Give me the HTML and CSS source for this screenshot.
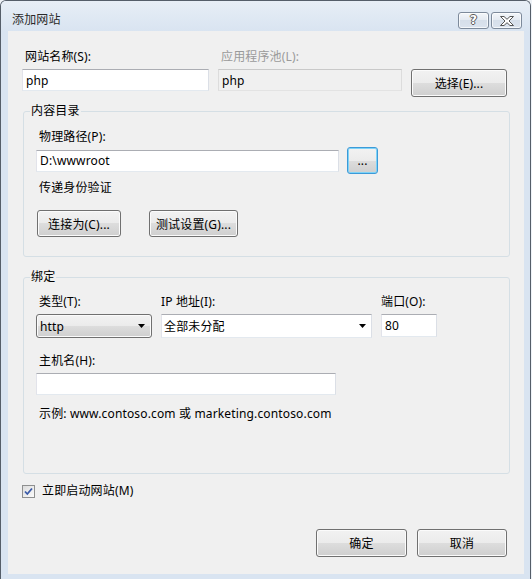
FILE: index.html
```html
<!DOCTYPE html>
<html lang="zh-CN">
<head>
  <meta charset="UTF-8">
  <title>添加网站</title>
  <link rel="stylesheet" href="styles.css">
</head>
<body>

<div class="window">
  <div class="titlebar">
    <span class="title">添加网站</span>
    <div class="caption-buttons">
      <span class="cap-btn help">?</span>
      <span class="cap-btn close">
        <svg width="14" height="10" viewBox="0 0 14 10">
          <polygon points="0.5,0.5 4,0.5 7,3.3 10,0.5 13.5,0.5 9,5 13.5,9.5 10,9.5 7,6.7 4,9.5 0.5,9.5 5,5" fill="#fff" stroke="#555" stroke-width="1" stroke-linejoin="round"/>
        </svg>
      </span>
    </div>
  </div>

  <div class="client">
    <!-- 网站名称 / 应用程序池 -->
    <div class="site-grid">
      <div class="lbl">网站名称(S):</div>
      <div class="lbl disabled">应用程序池(L):</div>
      <div></div>
      <input class="textbox site-name" type="text" value="php">
      <input class="textbox readonly pool" type="text" value="php" readonly>
      <button class="btn select-btn">选择(E)...</button>
    </div>

    <fieldset class="group group-content">
      <legend>内容目录</legend>
      <div class="lbl first">物理路径(P):</div>
      <div class="path-row">
        <input class="textbox path" type="text" value="D:\wwwroot">
        <button class="btn browse focused">...</button>
      </div>
      <div class="lbl note">传递身份验证</div>
      <div class="btn-row">
        <button class="btn connect-btn">连接为(C)...</button>
        <button class="btn test-btn">测试设置(G)...</button>
      </div>
    </fieldset>

    <fieldset class="group group-binding">
      <legend>绑定</legend>
      <div class="bind-grid">
        <div class="lbl">类型(T):</div>
        <div class="lbl flush">IP 地址(I):</div>
        <div class="lbl flush">端口(O):</div>
        <div class="combo dropdown">
          <span>http</span>
          <svg class="arrow" width="7" height="4" viewBox="0 0 7 4"><polygon points="0,0 7,0 3.5,4" fill="#000"/></svg>
        </div>
        <div class="combo editable">
          <span>全部未分配</span>
          <svg class="arrow" width="7" height="4" viewBox="0 0 7 4"><polygon points="0,0 7,0 3.5,4" fill="#000"/></svg>
        </div>
        <input class="textbox port" type="text" value="80">
      </div>
      <div class="lbl host-lbl">主机名(H):</div>
      <input class="textbox host" type="text" value="">
      <div class="lbl example">示例: www.contoso.com 或 marketing.contoso.com</div>
    </fieldset>

    <div class="check-row">
      <span class="checkbox">
        <svg width="11" height="11" viewBox="0 0 11 11"><path d="M2 5.5 L4.3 8 L9 2.5" fill="none" stroke="#3a5aa8" stroke-width="1.8"/></svg>
      </span>
      <span>立即启动网站(M)</span>
    </div>

    <div class="footer">
      <button class="btn ok-btn">确定</button>
      <button class="btn cancel-btn">取消</button>
    </div>
  </div>
</div>

</body>
</html>
```

FILE: styles.css
```css
body {
  margin: 0;
  background-color: #eef2f7;
  font-family: "Noto Sans", "Noto Sans CJK SC", sans-serif;
  font-size: 12px;
  letter-spacing: 0.15px;
  color: #000;
  overflow: hidden;
}
.window {
  width: 531px;
  height: 579px;
  box-sizing: border-box;
  border: 1px solid #555e69;
  border-bottom: 0;
  border-radius: 6px 6px 0 0;
  background-color: #d9e4f1;
}
.titlebar {
  height: 30px;
  display: flex;
  justify-content: space-between;
  align-items: flex-start;
  padding: 0 8px 0 11px;
  background: linear-gradient(#e7eef6, #d9e4f1);
  border-radius: 5px 5px 0 0;
}
.title {
  margin-top: 11px;
  line-height: 16px;
  color: #2a2a2a;
}
.caption-buttons {
  display: flex;
  gap: 2px;
  margin-top: 11px;
}
.cap-btn {
  width: 31px;
  height: 17px;
  box-sizing: border-box;
  border: 1px solid #7d8a9b;
  border-radius: 3px;
  background: linear-gradient(#f3f6fa, #e3e9f1 50%, #d6dfea 50%, #dbe3ee);
  box-shadow: inset 0 0 0 1px rgba(255,255,255,0.7);
  display: flex;
  align-items: center;
  justify-content: center;
}
.help {
  font-family: "DejaVu Sans", sans-serif;
  font-weight: bold;
  font-size: 12px;
  line-height: 15px;
  letter-spacing: 0;
  color: #fff;
  text-shadow: 1px 0 0 #5a5a5a, -1px 0 0 #5a5a5a, 0 1px 0 #5a5a5a, 0 -1px 0 #5a5a5a;
}
.client {
  margin: 0 6px 0 7px;
  height: 543px;
  box-sizing: border-box;
  padding: 18px 17px 0 14px;
  background-color: #f0f0f0;
  overflow: hidden;
}
.lbl {
  line-height: 16px;
  padding-left: 3px;
}
.lbl.flush {
  padding-left: 0;
}
.disabled {
  color: #9a9a9a;
}
.textbox {
  display: block;
  box-sizing: border-box;
  height: 22px;
  margin: 0;
  padding: 0 3px;
  border: 1px solid;
  border-color: #abadb3 #dbdfe6 #e3e9ef #e2e3ea;
  background-color: #fff;
  font-family: inherit;
  font-size: 12px;
  letter-spacing: inherit;
  color: #000;
  outline: none;
}
.readonly {
  background-color: #f0f0f0;
  border-color: #c9c9c9 #dcdcdc #e3e3e3 #dcdcdc;
}
.btn {
  box-sizing: border-box;
  height: 27px;
  margin: 0;
  padding: 0;
  border: 1px solid #707070;
  border-radius: 3px;
  background: linear-gradient(#f2f2f2, #ebebeb 50%, #dddddd 50%, #cfcfcf);
  box-shadow: inset 0 0 0 1px #fbfbfb;
  font-family: inherit;
  font-size: 12px;
  letter-spacing: inherit;
  color: #000;
}
.focused {
  border-color: #3c9ad8;
  box-shadow: inset 0 0 0 1px #7fd3f7;
}

/* first block */
.site-grid {
  display: grid;
  grid-template-columns: 187px 184px 96px;
  column-gap: 9px;
  row-gap: 4px;
  align-items: start;
}
.select-btn {
  height: 28px;
}

/* group boxes */
.group {
  width: 487px;
  box-sizing: border-box;
  min-width: 0;
  margin: 0 0 0 1px;
  border: 1px solid #d5dfe5;
  border-radius: 3px;
  padding: 0 12px;
}
.group legend {
  margin-left: -6px;
  padding: 0 1px;
  line-height: 16px;
}
.group-content {
  margin-top: 6px;
  padding-bottom: 19px;
}
.group-binding {
  margin-top: 12px;
  padding-bottom: 51px;
}
.first {
  margin-top: 10px;
}
.path-row {
  display: flex;
  align-items: center;
  gap: 8px;
  height: 27px;
  margin-top: 2px;
}
.path {
  width: 303px;
}
.browse {
  width: 31px;
}
.note {
  margin-top: 6px;
}
.btn-row {
  display: flex;
  gap: 28px;
  margin-top: 14px;
  padding-left: 1px;
}
.connect-btn {
  width: 84px;
}
.test-btn {
  width: 89px;
}

/* binding */
.bind-grid {
  display: grid;
  grid-template-columns: 116px 211px 56px;
  column-gap: 9px;
  row-gap: 4px;
  align-items: start;
  margin-top: 9px;
}
.combo {
  height: 24px;
  box-sizing: border-box;
  display: flex;
  align-items: center;
  justify-content: space-between;
}
.dropdown {
  padding: 0 6px 0 3px;
  border: 1px solid #707070;
  border-radius: 3px;
  background: linear-gradient(#f2f2f2, #ebebeb 50%, #dddddd 50%, #cfcfcf);
  box-shadow: inset 0 0 0 1px #fbfbfb;
}
.editable {
  padding: 0 5px 0 2px;
  border: 1px solid;
  border-color: #abadb3 #dbdfe6 #e3e9ef #e2e3ea;
  background-color: #fff;
}
.port {
  width: 56px;
  height: 23px;
}
.host-lbl {
  margin-top: 15px;
}
.host {
  width: 300px;
  margin-top: 4px;
}
.example {
  margin-top: 11px;
}

/* bottom */
.check-row {
  display: flex;
  align-items: center;
  gap: 7px;
  margin-top: 9px;
  line-height: 16px;
}
.checkbox {
  width: 13px;
  height: 13px;
  box-sizing: border-box;
  border: 1px solid #8e8f8f;
  background: linear-gradient(135deg, #dcdcdc, #fbfbfb);
  display: flex;
  align-items: center;
  justify-content: center;
}
.footer {
  display: flex;
  justify-content: flex-end;
  gap: 10px;
  margin-top: 30px;
}
.ok-btn {
  width: 91px;
  height: 28px;
}
.cancel-btn {
  width: 90px;
  height: 28px;
}
```
